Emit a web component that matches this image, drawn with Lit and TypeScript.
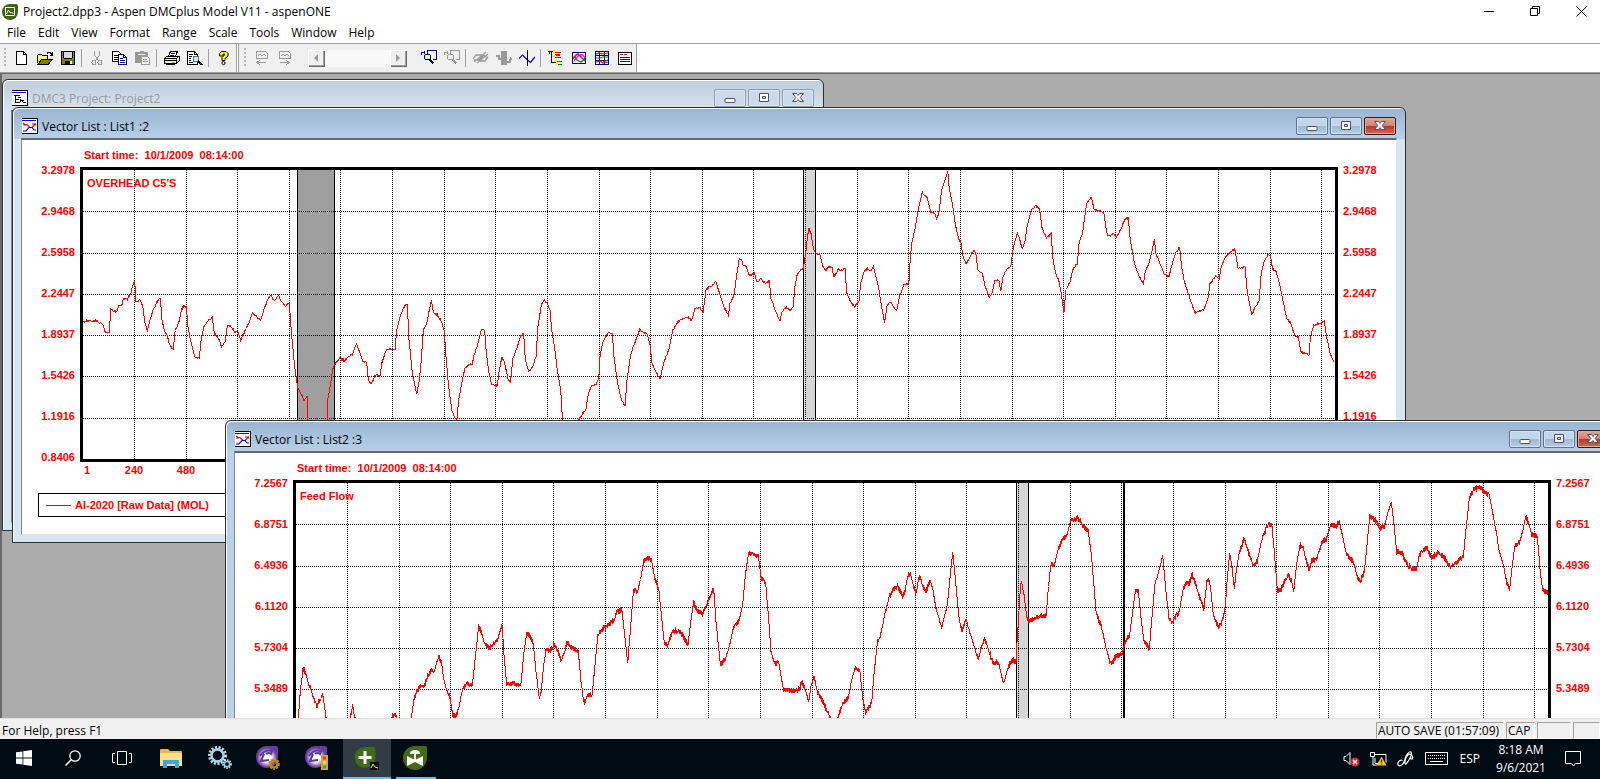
import { LitElement, html, svg, css, nothing } from "lit";
import { customElement, property } from "lit/decorators.js";
import { classMap } from "lit/directives/class-map.js";
import { styleMap } from "lit/directives/style-map.js";

/* ---------- trend data ---------- */

interface Segment {
  originX: number;
  originY: number;
  scaleX: number;
  scaleY: number;
  samples: string;
}

interface Band {
  from: number;
  to: number;
  fill: string;
}

interface Trend {
  name: string;
  tag?: string;
  ticks: string[];
  times: string[];
  bands: Band[];
  noise: number;
  density: number;
  segments: Segment[];
}

const overhead: Trend = {
  name: "OVERHEAD C5'S",
  tag: "AI-2020 [Raw Data] (MOL)",
  ticks: ["3.2978", "2.9468", "2.5958", "2.2447", "1.8937", "1.5426", "1.1916", "0.8406"],
  times: ["240", "480"],
  bands: [
    { from: 217, to: 254, fill: "#9f9f9f" },
    { from: 723, to: 735, fill: "#d6d6d6" },
  ],
  noise: 0.8,
  density: 2,
  segments: [
    {
      originX: -80, originY: -27, scaleX: 3, scaleY: 3,
      samples: `248,546 260,541 275,544 290,543 300,549 308,553 316,577 328,577 332,509 340,513 350,515 356,497
        366,495 370,476 382,478 392,462 398,436 404,423 408,485 420,480 428,495 434,545 442,572 450,540 460,508
        470,488 481,473 486,540 494,575 502,587 508,612 520,630 525,575 537,545 545,508 552,497 559,502 564,560
        570,595 585,652 598,655 604,595 612,560 622,543 637,532 643,580 655,595 665,620 676,605 682,557 692,557
        705,577 713,573 722,602 735,572 747,550 757,518 770,530 782,540 795,500 803,478 812,466 818,477 826,480
        835,466 845,485 855,498 868,491 873,560 880,640 886,695 893,742 902,760 913,782 921,768 923,850 924,955
        982,955 983,780 990,740 1000,680 1010,665 1020,653 1033,663 1045,651 1057,643 1069,612 1080,640 1088,662
        1100,668 1105,720 1114,732 1125,705 1140,708 1146,668 1155,640 1162,628 1185,629 1190,570 1202,525
        1212,502 1222,491 1227,600 1237,700 1250,763 1258,720 1264,660 1270,570 1280,550 1287,515 1294,482
        1300,515 1312,525 1325,545 1331,568`,
    },
    {
      originX: 360, originY: -27, scaleX: 3, scaleY: 3,
      samples: `13,575 18,650 26,740 36,815 44,832 51,838 56,780 65,730 75,685 85,674 97,673 102,645 112,618
        124,570 134,570 139,640 147,700 155,733 172,737 178,690 186,650 194,670 204,716 211,725 219,655 232,620
        242,588 251,580 256,660 266,694 276,685 288,650 294,560 304,495 313,480 322,492 330,510 335,570 344,625
        352,690 362,750 368,850 380,950 400,900 418,835 428,822 438,808 443,770 454,738 466,736 476,718 480,650
        488,608 505,577 517,580 522,650 532,725 544,778 555,798 561,720 571,650 580,620 592,590 599,568 610,578
        622,583 630,615 636,670 645,690 660,717 672,665 687,628 697,575 710,550 722,538 742,532 755,541 765,505
        780,503 789,518 798,450 808,441 818,437 827,423 835,448 845,480 853,504 865,525 870,492 883,463 888,420
        897,360 903,356 910,375 918,377 927,405 940,402 943,396 950,427 963,416 976,430 988,422 993,475
        1005,508 1020,543 1025,517 1038,502 1052,513 1060,498 1064,445 1072,403 1083,389 1090,385 1097,340
        1103,285 1107,265 1113,280 1120,325 1128,340 1140,345 1148,378 1158,390 1170,378 1177,383 1181,412
        1195,388 1206,391 1215,385 1220,460 1230,480 1243,501 1257,483 1262,430 1272,396 1282,386 1292,392
        1300,380 1306,403 1316,443 1323,490 1334,548 1342,493 1353,488 1362,504 1370,510 1378,473 1391,435
        1405,430`,
    },
    {
      originX: 800, originY: -27, scaleX: 2.904, scaleY: 3,
      samples: `84,429 87,370 92,310 102,265 113,200 123,155 127,165 137,172 147,215 158,220 165,237 171,218
        179,150 189,118 197,95 201,145 209,185 220,260 229,300 236,310 240,345 250,373 262,348 274,330 279,345
        284,390 297,400 305,435 317,472 327,455 333,422 345,420 351,453 357,410 367,390 380,378 387,325 393,300
        399,280 405,295 413,327 420,310 427,260 439,212 452,198 463,204 470,262 483,294 497,280 502,355 510,402
        520,425 528,470 534,520 540,450 552,425 561,385 573,372 578,310 588,280 600,190 614,172 622,210 635,210
        650,218 655,255 660,285 668,289 677,280 687,292 700,265 713,235 721,233 727,300 740,375 753,410 765,432
        770,395 782,368 797,298 801,340 813,370 825,400 839,411 847,378 858,340 870,322 876,380 884,425 900,475
        914,518 927,513 940,510 952,478 958,432 975,408 985,418 990,385 1003,350 1015,338 1030,326 1040,385
        1060,382 1067,460 1080,525 1090,500 1101,483 1107,400 1115,365 1127,343 1134,347 1140,387 1150,392
        1162,440 1172,490 1181,535 1193,550 1205,587 1215,592 1222,635 1235,640 1246,645 1250,590 1260,555
        1275,552 1290,543 1297,590 1307,640 1320,668`,
    },
  ],
};

const feed: Trend = {
  name: "Feed Flow",
  ticks: ["7.2567", "6.8751", "6.4936", "6.1120", "5.7304", "5.3489"],
  times: [],
  bands: [
    { from: 723, to: 735, fill: "#d6d6d6" },
    { from: 830, to: 831, fill: "#000" },
  ],
  noise: 2.6,
  density: 5,
  segments: [
    {
      originX: -73, originY: -65, scaleX: 3, scaleY: 3,
      samples: `235,908 241,830 249,760 258,778 268,815 275,830 282,855 291,872 302,852 308,835 313,870 318,910
        360,1000 390,915 398,870 404,910 450,1000 512,930 517,902 529,903 540,1000 574,910 582,850 597,818 610,815
        625,785 632,768 642,770 650,745 657,722 665,745 670,785 680,830 690,845 698,900 708,903 716,880 728,820
        740,805 757,810 764,745 776,633 785,655 795,690 808,698 820,685 833,672 846,630 853,730 860,808 880,805
        902,812 912,715 920,655 930,662 940,685 948,770 958,850 964,830 970,760 978,700 988,710 1004,688
        1015,715 1024,738 1032,710 1041,684 1055,697 1075,710 1083,800 1092,865 1103,840 1117,838 1124,760
        1134,658 1150,640 1168,625 1180,618 1190,593 1205,583 1214,660 1223,745 1230,660 1240,530 1245,520
        1252,535 1262,490 1272,437 1282,430 1294,435 1305,490 1317,525 1325,610 1333,685 1343,692 1350,670
        1358,648 1376,648`,
    },
    {
      originX: 387, originY: -65, scaleX: 3, scaleY: 3,
      samples: `0,650 10,665 24,690 31,630 41,560 52,588 68,598 80,568 101,522 108,620 121,748 135,735 148,695
        160,640 178,612 188,570 196,480 206,413 218,420 235,422 243,485 257,508 265,600 273,710 285,748 296,742
        310,822 330,826 353,828 366,803 378,830 386,860 393,815 402,785 412,830 430,862 450,908 462,930 474,908
        490,862 505,848 515,795 526,757 540,770 548,850 557,893 575,862 583,770 592,685 603,655 613,605 628,545
        638,522 655,515 668,545 675,530 683,485 691,475 700,510 709,535 714,495 720,485 728,512 738,530 750,495
        758,520 768,580 785,638 792,610 802,570 811,480 818,413 826,490 835,590 842,638 848,642 858,612 870,655
        880,685 895,735 903,700 912,675 920,685 928,715 940,745 955,740 963,775 971,806 985,755 995,737
        1008,740 1013,650 1020,540 1024,495 1032,540 1040,605 1047,620 1065,610 1085,602 1098,606 1105,520
        1112,450 1123,452 1135,400 1150,370 1160,365 1172,315 1185,315 1194,305 1210,335 1225,348 1236,440
        1248,590 1265,640 1280,705 1290,742 1300,742 1310,722 1317,720`,
    },
    {
      originX: 827, originY: -65, scaleX: 3, scaleY: 3,
      samples: `0,720 6,718 13,690 22,668 28,665 38,590 46,530 55,527 63,610 72,680 88,702 98,580 105,508
        115,475 128,422 137,520 147,610 157,622 165,608 178,590 190,520 197,505 208,505 217,478 228,510 238,545
        252,582 260,505 266,490 272,520 280,600 295,637 310,610 317,560 322,490 329,415 335,450 343,520 350,460
        358,410 373,372 385,410 400,452 412,437 425,375 440,335 455,325 462,400 472,525 483,525 495,495 505,480
        515,500 521,528 531,440 540,390 550,400 558,435 568,465 573,440 590,432 605,385 620,368 633,328 650,335
        658,318 668,365 680,420 700,440 712,485 721,500 733,470 740,400 749,303 765,315 780,340 793,335 803,295
        814,262 820,310 830,410 845,415 860,445 875,460 890,462 898,420 910,405 920,398 935,430 955,412 975,430
        990,455 1010,443 1030,425 1038,340 1048,250 1060,225 1077,212 1090,230 1108,240 1118,295 1128,345
        1137,405 1150,450 1160,500 1169,522 1178,440 1185,392 1200,380 1210,340 1218,303 1226,325 1235,358
        1252,365 1260,460 1268,527 1285,533`,
    },
  ],
};

/* Resamples the recorded points along each pixel column and adds sensor ripple. */
function tracePath(trend: Trend): string {
  const points: [number, number][] = [];
  for (const s of trend.segments) {
    for (const pair of s.samples.trim().split(/\s+/)) {
      const [x, y] = pair.split(",").map(Number);
      points.push([s.originX + x / s.scaleX, s.originY + y / s.scaleY]);
    }
  }
  let d = "";
  let seed = 7;
  for (let i = 0; i < points.length - 1; i++) {
    const [x0, y0] = points[i];
    const [x1, y1] = points[i + 1];
    const steps = Math.max(1, Math.round((x1 - x0) * trend.density));
    const steep = Math.abs(y1 - y0) > (x1 - x0) * 3;
    for (let k = 0; k < steps; k++) {
      seed = (seed * 1103515245 + 12345) % 2147483648;
      const ripple = (seed / 2147483648 - 0.5) * 2 * trend.noise * (steep ? 0.3 : 1);
      const x = x0 + ((x1 - x0) * k) / steps;
      const y = Math.max(4, y0 + ((y1 - y0) * k) / steps + ripple);
      d += `${d ? "L" : "M"}${x.toFixed(1)} ${y.toFixed(1)}`;
    }
  }
  return d;
}

@customElement("trend-chart")
class TrendChart extends LitElement {
  @property({ attribute: false }) trend!: Trend;

  static styles = css`
    :host {
      display: block;
      color: #f00;
      font: bold 11px/14px "Liberation Sans", Arial, sans-serif;
    }
    .chart {
      display: grid;
      grid-template-columns: 58px max-content 1fr;
      grid-template-rows: 26px max-content;
      padding-top: 1px;
    }
    .axis {
      grid-row: 1 / 3;
      margin: 0;
      padding: 9px 0 0;
      list-style: none;
      line-height: 41px;
    }
    .axis.left {
      grid-column: 1;
      text-align: right;
      padding-right: 5px;
    }
    .axis.right {
      grid-column: 3;
      padding-left: 5px;
    }
    .start {
      grid-column: 2;
      grid-row: 1;
      white-space: pre;
      padding: 7px 0 0 4px;
    }
    .plot {
      grid-column: 2;
      grid-row: 2;
      display: block;
      overflow: visible;
    }
    .plot text {
      fill: #f00;
    }
    .crisp {
      shape-rendering: crispEdges;
      fill: none;
    }
    .legend {
      display: flex;
      align-items: center;
      gap: 4px;
      box-sizing: border-box;
      margin: 15px 28px 0 16px;
      padding: 0 7px;
      height: 24px;
      border: 1px solid #000;
    }
    .key {
      width: 25px;
      height: 1px;
      background: #f00;
    }
  `;

  render() {
    const t = this.trend;
    const columns = Array.from({ length: 24 }, (_, i) => Math.floor(2.86 + (i + 1) * 51.62));
    const rows = [44, 86, 127, 168, 209, 251];
    const axis = (side: string) =>
      html`<ul class="axis ${side}">${t.ticks.map((v) => html`<li>${v}</li>`)}</ul>`;
    return html`
      <div class="chart">
        ${axis("left")}
        <div class="start">Start time:  10/1/2009  08:14:00</div>
        <svg class="plot" width="1258" height="311" viewBox="0 0 1258 311" role="img" aria-label=${t.name}>
          <g class="crisp">
            ${t.bands.map(
              (b) => svg`<rect x=${b.from + 0.5} y="1.5" width=${b.to - b.from} height="292" fill=${b.fill} stroke="#000"/>`
            )}
            <g stroke="#000" stroke-dasharray="1 1">
              ${columns.map((x) => svg`<path d=${`M${x + 0.5} 3V292`}/>`)}
              ${rows.map((y) => svg`<path d=${`M3 ${y + 0.5}H1255`}/>`)}
            </g>
            <path d=${tracePath(t)} stroke="#f00" />
            <rect x="1.5" y="1.5" width="1255" height="292" stroke="#000" stroke-width="3" />
          </g>
          <text x="7" y="20">${t.name}</text>
          ${t.times.length ? svg`<text x="7" y="307" text-anchor="middle">1</text>` : nothing}
          ${t.times.map((label, i) => svg`<text x=${columns[i]} y="307" text-anchor="middle">${label}</text>`)}
        </svg>
        ${axis("right")}
      </div>
      ${t.tag ? html`<div class="legend"><span class="key"></span>${t.tag}</div>` : nothing}
    `;
  }
}

/* ---------- child windows ---------- */

const projectIcon = svg`<g shape-rendering="crispEdges"><path fill="#fff" d="M0 0h16v16H0z"/><path fill="#000" d="M0 0h16v1H0zM15 0h1v16h-1zM0 15h16v1H0z"/><path fill="#00f" d="M0 2h14v1H0z"/><path fill="#000" d="M2 5h6v1H2zM3 5h1v8H3zM4 9h3v1H4zM4 12h4v1H4zM6 7h3v1H6zM8 9h1v3H8zM9 10h3v1H9zM11 12h3v1h-3zM10 11h1v1h-1z"/></g>`;
const vectorIcon = svg`<g shape-rendering="crispEdges"><path fill="#fff" d="M0 0h16v16H0z"/><path fill="#000" d="M0 0h16v1H0zM15 0h1v16h-1zM0 15h16v1H0z"/><path fill="#00f" d="M0 2h14v1H0z"/></g><path fill="none" stroke="#f00" stroke-width="1.200" d="M1 5l2 1.500h2l3 3 2 0 4-4M1 7h3M10 6h3l1 1.500"/><path fill="none" stroke="#00f" stroke-width="1.200" d="M1 13h3l3-3.500h3l2 2.500h2"/>`;

@customElement("mdi-window")
class MdiWindow extends LitElement {
  @property() caption = "";
  @property() kind = "vector";
  @property({ type: Boolean, reflect: true }) inactive = false;
  @property({ type: Boolean, reflect: true }) front = false;

  static styles = css`
    :host {
      display: flex;
      flex-direction: column;
      box-sizing: border-box;
      border: 1px solid #2b2f33;
      border-radius: 6px 6px 0 0;
      background: linear-gradient(#99b4d1, #b9d1ea 31px, #d7e4f2 31px);
      box-shadow: inset 1px 1px 0 #fff;
      padding: 0 8px 7px;
    }
    :host([front]) {
      background: linear-gradient(#99b4d1, #b9d1ea 31px, #b9d1ea);
    }
    :host([inactive]) {
      background: linear-gradient(#bfcddb, #d7e4f2 31px, #d7e4f2);
      color: #999;
    }
    .bar {
      display: flex;
      align-items: center;
      flex: none;
      height: 30px;
      padding: 0 1px 0 0;
      font: 12px/16px "Open Sans", "Noto Sans", sans-serif;
    }
    .icon {
      width: 16px;
      height: 16px;
      margin: 6px 4px 0 1px;
    }
    .caption {
      flex: 1;
      padding-top: 7px;
    }
    .controls {
      display: flex;
      gap: 2px;
      padding-top: 6px;
    }
    .control {
      display: grid;
      place-items: center;
      width: 32px;
      height: 18px;
      padding: 0;
      border: 1px solid #5b7291;
      border-radius: 2px;
      background: linear-gradient(#c3d6e9 50%, #9db8d3 50%, #b7cde4);
      box-shadow: inset 0 0 0 1px #d3e2f1;
    }
    .control.close {
      border-color: #43141a;
      background: linear-gradient(#e0a59c, #d18172 50%, #b5361d 50%, #cf6d55);
      box-shadow: inset 0 0 0 1px #e3a79c;
    }
    :host([inactive]) .control {
      border-color: #8a9bb5;
      background: #cbd9e8;
      box-shadow: inset 0 0 0 1px #dbe6f2;
    }
    .body {
      flex: 1;
      overflow: hidden;
      background: #fff;
      border-style: solid;
      border-width: 2px 1px 1px;
      border-color: #696969 #e3e3e3 #e3e3e3 #8a8a8a;
    }
  `;

  render() {
    const glyph = (g: unknown) => html`<svg width="14" height="12" viewBox="0 0 14 12">${g}</svg>`;
    return html`
      <div class="bar">
        <svg class="icon" viewBox="0 0 16 16">${this.kind === "project" ? projectIcon : vectorIcon}</svg>
        <span class="caption">${this.caption}</span>
        <div class="controls">
          <button class="control" aria-label="Minimize">
            ${glyph(svg`<rect x="2" y="6.500" width="10" height="4" rx="1" fill="#fff" stroke="#4d5366"/>`)}
          </button>
          <button class="control" aria-label="Maximize">
            ${glyph(svg`<path d="M2.500 1.500h9v8h-9zM5.500 4.500v2h3v-2z" fill="#fff" fill-rule="evenodd" stroke="#4d5366"/>`)}
          </button>
          <button class="control close" aria-label="Close">
            ${glyph(svg`<path d="M1.500 1.500h4L7 3.500l1.500-2h4L9.200 5.500l3.300 4h-4L7 7.500l-1.500 2h-4l3.300-4z" fill="#fff" stroke="#4d5366"/>`)}
          </button>
        </div>
      </div>
      <div class="body"><slot></slot></div>
    `;
  }
}

/* ---------- toolbar icons ---------- */

const px = (content: unknown) =>
  html`<svg width="16" height="16" viewBox="0 0 16 16" shape-rendering="crispEdges">${content}</svg>`;

const icons = {
  new: px(svg`<path d="M3 1h7l3 3v10H3z" fill="#fff"/><path d="M2.500 1.500h7l3 3v10h-10zM9.500 1.500v3h3" fill="none" stroke="#000"/>`),
  open: px(svg`<path d="M1 5h4l1 1h5v3H5l-4 5z" fill="#ffff80"/><path d="M.5 13V5.500l1-1h3l1 1h5v3M10 3.500l1-1h2l2 2M15.500 2v3h-3" fill="none" stroke="#000"/><path d="M1 14l4-5h10.500l-4 5z" fill="#808000" stroke="#000"/>`),
  save: px(svg`<path d="M1 1h14v14H1z" fill="#000"/><path d="M2 2h1v6h1v1h8V8h1V2h1v12h-2v-3H5v3H2z" fill="#808000"/><path d="M4 2h8v6H4z" fill="#d8d8d8"/><path d="M10 11h2v3h-2z" fill="#fff"/>`),
  cut: px(svg`<path d="M5.500 1v4l4 6M10.500 1v4l-4 6" stroke="#999" fill="none"/><circle cx="5" cy="12.500" r="2" fill="none" stroke="#999"/><circle cx="11" cy="12.500" r="2" fill="none" stroke="#999"/>`),
  copy: px(svg`<path d="M.5 1.500h6l3 3v7h-9z" fill="#fff" stroke="#000"/><path d="M2 5.500h4M2 7.500h4M2 9.500h4" stroke="#000"/><path d="M6.500 4.500h5l3 3v7h-8z" fill="#fff" stroke="#000080"/><path d="M11.500 4.500v3h3M8 8.500h3M8 10.500h5M8 12.500h5" stroke="#000080" fill="none"/>`),
  paste: px(svg`<path d="M0 2h4l2-1h2l2 1h3v5H6v6H0z" fill="#999"/><path d="M3 4h7" stroke="#f0f0f0"/><path d="M6.500 6.500h6l2 2v6h-8z" fill="#eee" stroke="#999"/><path d="M8 9.500h4M8 11.500h5" stroke="#999"/>`),
  print: px(svg`<path d="M4.500 6l2-4.500h7L11.500 6" fill="#fff" stroke="#000"/><path d="M7 3.500h4M6 5.500h4" stroke="#000"/><path d="M.5 8.500l3-2.500h11l-2 2.500zM.5 8.500h12v5h-12zM12.500 13.500l3-3V6" fill="#e8e8e8" stroke="#000"/><path d="M1 10.500h12" stroke="#000"/><path d="M8 12h3" stroke="#cc0"/><path d="M2 14h9v1H2z" fill="#000"/>`),
  preview: px(svg`<path d="M.5 1.500h7l3 3v10H.5z" fill="#fff" stroke="#000"/><path d="M7.500 1.500v3h3M2 4.500h4M2 6.500h3M2 8.500h2M2 10.500h2M2 12.500h4" stroke="#000" fill="none"/><circle cx="9" cy="9" r="3" fill="#aff" stroke="#666"/><path d="M11 11l4.500 4" stroke="#000" stroke-width="2"/>`),
  help: px(svg`<g shape-rendering="auto"><path d="M3.500 6V3.500l2-2h4.500l2 2V6L9 8.500v2H6v-3l2.500-2.500V4H7v2z" fill="#ff0" stroke="#000"/><circle cx="7.500" cy="13" r="1.600" fill="#ff0" stroke="#000"/></g>`),
  prev: px(svg`<path d="M2.500 8.500v-7h9l2 2v5zM4 6l2-2 2 2 2-2 2 2" fill="none" stroke="#999"/><path d="M3 12.500h9M6 10l-3 2.500 3 2.500" fill="none" stroke="#999"/>`),
  next: px(svg`<path d="M2.500 8.500v-7h9l2 2v5zM4 6l2-2 2 2 2-2 2 2" fill="none" stroke="#999"/><path d="M3 12.500h9M9 10l3 2.500-3 2.500" fill="none" stroke="#999"/>`),
  zoomIn: px(svg`<path d="M6 .5h9.500v9H12M6.500.5v3" fill="none" stroke="#000080"/><path d="M0 2.500h4M.5 5V3M3.500 1v3" stroke="#000080" fill="none"/><circle cx="6.500" cy="7" r="3" fill="#bff" stroke="#000"/><path d="M8.500 9.500l4 4" stroke="#000" stroke-width="2.500"/>`),
  zoomOut: px(svg`<path d="M6 .5h9.500v9H12M6.500.5v3" fill="none" stroke="#999"/><path d="M0 2.500h4M.5 5V3M3.500 1v3" stroke="#999" fill="none"/><circle cx="6.500" cy="7" r="3" fill="#eee" stroke="#999"/><path d="M8.500 9.500l4 4" stroke="#999" stroke-width="2.500"/>`),
  hide: px(svg`<g shape-rendering="auto"><path d="M0 9l3-4h7l5 3M1 12L13 2M4 13L15 4M1 10h5l4-4M7 11h5l3-4" fill="none" stroke="#999" stroke-width="1.300"/></g>`),
  slice: px(svg`<path d="M5 1h6v14H5z" fill="#999"/><path d="M0 7V5.500h3v3h2M11 11.500h3l1-4" fill="none" stroke="#999" stroke-width="2"/>`),
  split: px(svg`<g shape-rendering="auto"><path d="M0 8.500L3.500 5l5 5 3 2.500L16 7" fill="none" stroke="#00c" stroke-width="1.200"/></g><path d="M8.500 0v16" stroke="#000"/>`),
  tree: px(svg`<path d="M0 1.500h6M3.500 1v12M1 1v3M4 5.500h2M3 12.500h5" fill="none" stroke="#000080"/><path d="M5 0h3v3H5zM4 5h3v3H4zM6 9h3v3H6zM8 12h2v3H8z" fill="#ff0"/><path d="M7 2.500h6M7 4.500h5M7 7.500h6M8 5.500h4" stroke="#f00"/><path d="M9 11.500h5M10 14.500h4" stroke="#080"/>`),
  plot: px(svg`<path d="M1.500 2.500h13v11h-13z" fill="#fff" stroke="#000080"/><g shape-rendering="auto"><path d="M2 9l3-4 2-1 3 3 4 4" fill="none" stroke="#f00" stroke-width="1.500"/><path d="M3 6l3 4 4 2 3-2 1-3" fill="none" stroke="#080" stroke-width="1.300"/><path d="M3 11l5-6h4l2 3" fill="none" stroke="#f0f" stroke-width="1.300"/></g>`),
  grid: px(svg`<path d="M1.500 1.500h13v13h-13zM1 5.500h14M1 10.500h14M5.500 1v14M10.500 1v14" fill="#fff" stroke="#000080"/><g shape-rendering="auto"><path d="M2 4l3-1 3 1 6-1M2 12l4-1 3 2 5-1" fill="none" stroke="#f00" stroke-width="1.200"/><path d="M2 8h4l3-1h5M9 12l5-2" fill="none" stroke="#080" stroke-width="1.200"/></g>`),
  list: px(svg`<path d="M1.500 2.500h13v12h-13z" fill="#fff" stroke="#000" stroke-width="1"/><path d="M3 4.500h3M7 4.500h3" stroke="#f00"/><path d="M3 7.500h10M3 9.500h10M3 11.500h10" stroke="#00f"/>`),
};

/* ---------- taskbar icons ---------- */

const sym = (w: number, h: number, content: unknown) =>
  html`<svg width=${w} height=${h} viewBox="0 0 ${w} ${h}">${content}</svg>`;

const phone = svg`<defs><radialGradient id="p"><stop offset=".45" stop-color="#fff"/><stop offset="1" stop-color="#7146a8"/></radialGradient></defs><path d="M12 0h8q2 0 2 2v9.500a11 11 0 1 1-10-11.500z" fill="#6a3ba0"/><circle cx="11" cy="11.500" r="9.500" fill="url(#p)"/><path d="M4 10q5-7 12-5l-1 3q-3-2-5 0M8 8l-3 7 8-1" fill="none" stroke="#5b3b94" stroke-width="2"/>`;

const taskIcons = {
  start: sym(16, 16, svg`<path d="M0 2.300l6.500-.9v6.200H0zM7.300 1.300L16 0v7.600H7.300zM0 8.400h6.500v6.200L0 13.700zM7.300 8.400H16V16l-8.700-1.200z" fill="#fff"/>`),
  search: sym(16, 16, svg`<circle cx="10" cy="6" r="5.200" fill="none" stroke="#fff" stroke-width="1.300"/><path d="M6.200 9.800L.5 15.500" stroke="#fff" stroke-width="1.500"/>`),
  tasks: sym(20, 14, svg`<path d="M5.500.5h9v13h-9zM3 2.500H.5v9H3M17 2.500h2.500v9H17" fill="none" stroke="#fff"/>`),
  folder: sym(22, 19, svg`<path d="M0 1q0-1 1-1h7l2 2h11q1 0 1 1v14H0z" fill="#e8b848"/><path d="M1 4h21v13H0V5z" fill="#fbe08c"/><path d="M3 11h16v8h-4v-4H7v4H3z" fill="#3ea4dc"/>`),
  gears: sym(24, 24, svg`<circle cx="9.500" cy="9.500" r="8" fill="none" stroke="#bcdcf0" stroke-width="3" stroke-dasharray="2 1.500"/><circle cx="9.500" cy="9.500" r="6" fill="none" stroke="#a9d1ea" stroke-width="2.500"/><circle cx="19" cy="18" r="3.800" fill="none" stroke="#d4e6f2" stroke-width="2" stroke-dasharray="1.500 1"/><circle cx="19" cy="18" r="2.600" fill="none" stroke="#a5c4da" stroke-width="1.500"/>`),
  phoneGear: sym(26, 24, svg`${phone}<circle cx="18" cy="18" r="3.500" fill="none" stroke="#b8860b" stroke-width="2.500"/><circle cx="18" cy="18" r="5" fill="none" stroke="#c8961b" stroke-width="1.500" stroke-dasharray="2 1.300"/>`),
  phoneLight: sym(26, 24, svg`${phone}<rect x="16" y="9" width="7" height="15" fill="#d6a640"/><circle cx="19.500" cy="12" r="1.800" fill="#e04030"/><circle cx="19.500" cy="16.500" r="1.800" fill="#f0e040"/><circle cx="19.500" cy="21" r="1.800" fill="#50a040"/>`),
  model: sym(26, 24, svg`<path d="M10.500 1h9q2 0 2 2v8.500a10.500 10.500 0 1 1-11-10.500z" fill="#436a16"/><path d="M11 5v13M4.500 11.500h13" stroke="#fff" stroke-width="3"/><path d="M16 16h9v8h-9z" fill="#111"/><path d="M17 22l2-4 2 3 3 1" fill="none" stroke="#ddd"/>`),
  valve: sym(26, 24, svg`<path d="M12 0h10q2 0 2 2v10a12 12 0 1 1-12-12z" fill="#436a16"/><path d="M4 10l8 4 8-4v10l-8-4-8 4zM7 8q0-4 5-4t5 4z" fill="#fff"/><path d="M12 7v8" stroke="#fff" stroke-width="2"/>`),
};

const trayIcons = {
  volume: sym(17, 16, svg`<path d="M1 5.500h2l4-4v12l-4-4H1z" fill="none" stroke="#fff"/><circle cx="12" cy="11" r="4.500" fill="#d8262f"/><path d="M10 9l4 4M14 9l-4 4" stroke="#fff" stroke-width="1.300"/>`),
  network: sym(17, 16, svg`<path d="M5 3.500h11v8M5 7v5.500h3M.5 1.500h4v4h-4zM3 6v8h4" fill="none" stroke="#fff"/><path d="M11.500 5.500l5 9h-10z" fill="#fcc515"/><path d="M11.500 8.500v3M11.500 12.500v1" stroke="#333" stroke-width="1.300"/>`),
  pen: sym(18, 16, svg`<path d="M5.500 9.500c-3-1.500-6 3-4 5 2 1 5-1 6-5s4-10 6.500-8.500c1.500 2-2 9-5 12-2 1-1-5 1-8s4-2 5-.500 1 3 0 3.500-2-1.500-1-2.500" fill="none" stroke="#fff" stroke-width="1.200"/>`),
  keyboard: sym(23, 14, svg`<rect x=".5" y=".5" width="22" height="12" fill="none" stroke="#fff"/><path d="M3 3.500h18M3 6.500h18" stroke="#fff" stroke-dasharray="1 1"/><path d="M5 9.500h13" stroke="#fff"/>`),
  notify: sym(17, 16, svg`<path d="M.5.5h15v12h-5l-2 2.500-2-2.500h-6z" fill="none" stroke="#fff"/>`),
};

interface Tool {
  label: string;
  icon: unknown;
  gap?: boolean;
}

const fileTools: Tool[] = [
  { label: "New", icon: icons.new },
  { label: "Open", icon: icons.open },
  { label: "Save", icon: icons.save },
  { label: "Cut", icon: icons.cut, gap: true },
  { label: "Copy", icon: icons.copy },
  { label: "Paste", icon: icons.paste },
  { label: "Print", icon: icons.print, gap: true },
  { label: "Print Preview", icon: icons.preview },
  { label: "Help", icon: icons.help, gap: true },
];

const pageTools: Tool[] = [
  { label: "Previous plot", icon: icons.prev },
  { label: "Next plot", icon: icons.next },
];

const viewTools: Tool[] = [
  { label: "Zoom in", icon: icons.zoomIn },
  { label: "Zoom out", icon: icons.zoomOut },
  { label: "Hide data", icon: icons.hide, gap: true },
  { label: "Slice", icon: icons.slice },
  { label: "Split", icon: icons.split },
  { label: "Tree", icon: icons.tree, gap: true },
  { label: "Plot", icon: icons.plot },
  { label: "Plot grid", icon: icons.grid },
  { label: "List", icon: icons.list },
];

const taskbar = [
  { label: "Start", icon: taskIcons.start, state: "" },
  { label: "Search", icon: taskIcons.search, state: "" },
  { label: "Task View", icon: taskIcons.tasks, state: "" },
  { label: "File Explorer", icon: taskIcons.folder, state: "" },
  { label: "Services", icon: taskIcons.gears, state: "" },
  { label: "Configuration", icon: taskIcons.phoneGear, state: "" },
  { label: "Status", icon: taskIcons.phoneLight, state: "" },
  { label: "DMCplus Model", icon: taskIcons.model, state: "active" },
  { label: "DMC3 Builder", icon: taskIcons.valve, state: "open" },
];

@customElement("app-root")
class AppRoot extends LitElement {
  static styles = css`
    :host {
      display: flex;
      flex-direction: column;
      height: 100vh;
      overflow: hidden;
      background: #fff;
      color: #000;
      font: 12px/16px "Open Sans", "Noto Sans", sans-serif;
    }
    button {
      font: inherit;
      color: inherit;
      border: 0;
      padding: 0;
      background: none;
    }
    svg {
      display: block;
    }
    .title {
      display: flex;
      align-items: center;
      gap: 5px;
      height: 23px;
      flex: none;
      padding: 0 12px 0 2px;
    }
    .title-text {
      flex: 1;
    }
    .frame-controls {
      display: flex;
      gap: 32px;
      height: 20px;
    }
    .frame-control {
      width: 14px;
      display: grid;
      place-items: center;
    }
    .menu {
      display: flex;
      height: 20px;
      flex: none;
      gap: 12px;
      padding: 0 7px;
      line-height: 20px;
    }
    .toolbars {
      display: flex;
      flex: none;
      height: 30px;
      border-top: 1px solid #a0a0a0;
      border-bottom: 1px solid #a0a0a0;
      box-sizing: border-box;
    }
    .band {
      display: flex;
      align-items: center;
      padding-right: 1px;
      background: #f0f0f0;
      border-right: 1px solid #a0a0a0;
    }
    .band + .band {
      border-left: 1px solid #a0a0a0;
      margin-left: 1px;
      padding: 0 0 0 1px;
    }
    .grip {
      width: 2px;
      height: 20px;
      margin: 0 4px;
      background: repeating-linear-gradient(#b4b4b4 0 2px, #f0f0f0 2px 4px);
    }
    .tool {
      display: grid;
      place-items: center;
      width: 23px;
      height: 22px;
    }
    .gap {
      width: 1px;
      height: 18px;
      margin: 0 3px 0 2px;
      background: #a0a0a0;
    }
    .scroller {
      display: flex;
      width: 99px;
      height: 17px;
      margin: 0 10px 0 12px;
      background: #f8f8f8;
      justify-content: space-between;
    }
    .arrow {
      display: grid;
      place-items: center;
      width: 17px;
      height: 17px;
      background: #f0f0f0;
      box-shadow: inset 1px 1px 0 #fff, inset -1px -1px 0 #696969, inset -2px -2px 0 #a0a0a0;
    }
    .desktop {
      position: relative;
      flex: 1;
      min-height: 0;
      overflow: hidden;
      background: #ababab;
      border-top: 1px solid #696969;
      border-left: 2px solid #696969;
      box-sizing: border-box;
    }
    .window {
      position: absolute;
    }
    .status {
      display: flex;
      flex: none;
      box-sizing: border-box;
      height: 21px;
      padding: 3px 0 0 2px;
      gap: 2px;
      background: #f0f0f0;
      border-top: 1px solid #e3e3e3;
    }
    .message {
      flex: 1;
      line-height: 18px;
    }
    .cell {
      box-sizing: border-box;
      height: 17px;
      padding-left: 1px;
      line-height: 16px;
      border: 1px solid;
      border-color: #a0a0a0 #fff #fff #a0a0a0;
      white-space: nowrap;
    }
    .cell.saving {
      width: 128px;
    }
    .cell.caps {
      width: 29px;
    }
    .cell.num {
      width: 34px;
    }
    .cell.scroll {
      width: 27px;
    }
    .taskbar {
      display: flex;
      flex: none;
      height: 40px;
      background: #010b14;
      color: #fff;
    }
    .task {
      display: grid;
      place-items: center;
      box-sizing: border-box;
      width: 48px;
      margin-right: 1px;
      border-bottom: 2px solid transparent;
    }
    .task.active {
      background: #323c46;
      border-color: #76b9ed;
    }
    .task.open {
      border-color: #76b9ed;
      width: 40px;
      margin-left: 4px;
    }
    .tray {
      display: flex;
      align-items: center;
      gap: 10px;
      margin-left: auto;
      padding-right: 18px;
    }
    .language {
      margin: 0 1px 0 2px;
    }
    .clock {
      width: 60px;
      text-align: center;
      line-height: 18px;
      margin: 0 4px 0 0;
    }
  `;

  private tools(list: Tool[]) {
    return list.map(
      (t) => html`${t.gap ? html`<span class="gap"></span>` : nothing}
        <button class="tool" aria-label=${t.label}>${t.icon}</button>`
    );
  }

  private box(left: number, top: number, width: number, height: number) {
    return styleMap({ left: `${left}px`, top: `${top}px`, width: `${width}px`, height: `${height}px` });
  }

  render() {
    const menus = ["File", "Edit", "View", "Format", "Range", "Scale", "Tools", "Window", "Help"];
    return html`
      <header class="title">
        <svg width="16" height="17" viewBox="0 0 16 17">
          <path d="M8 1h6q2 0 2 2v6a8 8 0 1 1-8-8z" fill="#3f6414" />
          <path d="M3.500 4.500h9v8h-9z" fill="none" stroke="#fff" /><path d="M4.500 11l2-4 2 3 1-1 2 2" fill="none" stroke="#fff" />
        </svg>
        <span class="title-text">Project2.dpp3 - Aspen DMCplus Model V11 - aspenONE</span>
        <div class="frame-controls">
          <button class="frame-control" aria-label="Minimize">${sym(11, 11, svg`<path d="M0 5.500h10" stroke="#000"/>`)}</button>
          <button class="frame-control" aria-label="Restore">${sym(11, 11, svg`<path d="M.5 2.500h7v7h-7zM2.500 2V.5h7v7H8" fill="none" stroke="#000"/>`)}</button>
          <button class="frame-control" aria-label="Close">${sym(11, 11, svg`<path d="M.5.5l10 10M10.500.5l-10 10" stroke="#000"/>`)}</button>
        </div>
      </header>
      <nav class="menu">${menus.map((m) => html`<button>${m}</button>`)}</nav>
      <div class="toolbars">
        <div class="band"><span class="grip"></span>${this.tools(fileTools)}</div>
        <div class="band">
          <span class="grip"></span>${this.tools(pageTools)}
          <div class="scroller">
            <button class="arrow" aria-label="Scroll left">${sym(5, 8, svg`<path d="M4 0v8L0 4z" fill="#999"/>`)}</button>
            <button class="arrow" aria-label="Scroll right">${sym(5, 8, svg`<path d="M0 0v8l4-4z" fill="#999"/>`)}</button>
          </div>
          ${this.tools(viewTools)}
        </div>
      </div>
      <main class="desktop">
        <mdi-window class="window" kind="project" caption="DMC3 Project: Project2" inactive style=${this.box(0, 5, 822, 452)}></mdi-window>
        <mdi-window class="window" caption="Vector List : List1 :2" style=${this.box(10, 33, 1394, 436)}>
          <trend-chart .trend=${overhead}></trend-chart>
        </mdi-window>
        <mdi-window class="window" caption="Vector List : List2 :3" front style=${this.box(223, 346, 1394, 436)}>
          <trend-chart .trend=${feed}></trend-chart>
        </mdi-window>
      </main>
      <footer class="status">
        <span class="message">For Help, press F1</span>
        <span class="cell saving">AUTO SAVE (01:57:09)</span>
        <span class="cell caps">CAP</span>
        <span class="cell num"></span>
        <span class="cell scroll"></span>
      </footer>
      <div class="taskbar">
        ${taskbar.map(
          (t) => html`<button class=${classMap({ task: true, active: t.state === "active", open: t.state === "open" })} aria-label=${t.label}>${t.icon}</button>`
        )}
        <div class="tray">
          ${trayIcons.volume}${trayIcons.network}${trayIcons.pen}${trayIcons.keyboard}
          <span class="language">ESP</span>
          <div class="clock">8:18 AM<br />9/6/2021</div>
          ${trayIcons.notify}
        </div>
      </div>
    `;
  }
}
